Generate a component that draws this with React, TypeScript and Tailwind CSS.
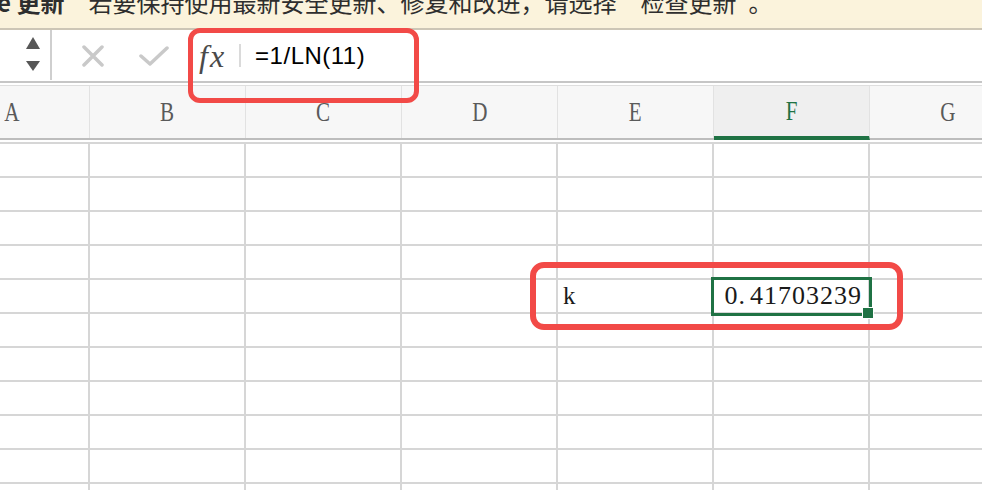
import React from 'react';

const cols = ['A', 'B', 'C', 'D', 'E', 'F', 'G'];
const rows = Array.from({ length: 11 }, (_, i) => i);

const Arrows: React.FC = () => (
    <svg width="16" height="36" viewBox="0 0 16 36">
        <path d="M8 0 L15 12 L1 12 Z" fill="#575757" />
        <path d="M1 24 L15 24 L8 34 Z" fill="#575757" />
    </svg>
);

const Cell: React.FC<{ col: string; row: number }> = ({ col, row }) => {
    if (row === 4 && col === 'E') {
        return (
            <div className="w-[156px] h-[34px] flex-none border-r-2 border-b-2 border-[#d6d6d6] pl-[5px] text-[25px] leading-[32px] text-[#1a1a1a] [font-family:'Liberation_Serif',serif]">
                k
            </div>
        );
    }
    if (row === 4 && col === 'F') {
        return (
            <div className="relative w-[156px] h-[34px] flex-none border-r-2 border-b-2 border-[#d6d6d6] pr-[6px] text-right text-[26px] leading-[32px] tracking-[1px] text-[#1a1a1a] [font-family:'Liberation_Serif',serif]">
                0.<span className="ml-[4px]">41703239</span>
                <div className="absolute -left-[3px] -top-[3px] w-[161px] h-[39px] border-[3px] border-[#1f7244]" />
                <div className="absolute left-[148px] top-[27px] w-[12px] h-[12px] bg-[#1f7244] border border-white" />
            </div>
        );
    }
    return <div className="w-[156px] h-[34px] flex-none border-r-2 border-b-2 border-[#d6d6d6]" />;
};

const App: React.FC = () => {
    return (
        <div className="relative w-[982px] h-[490px] overflow-hidden bg-white [font-family:'Liberation_Sans','Noto_Sans_CJK_SC',sans-serif]">
            {/* update banner */}
            <div className="h-[30px] bg-[#fbf3dc] border-b-2 border-[#cdc6b6] overflow-hidden whitespace-nowrap">
                <div className="-mt-[10px] -ml-[3px] text-[24px] leading-[24px] text-[#2e2e2e] [font-family:'Noto_Sans_CJK_SC',sans-serif]">
                    <span className="font-bold">e 更新”</span>若要保持使用最新安全更新、修复和改进，请选择“检查更新”。
                </div>
            </div>

            {/* formula bar */}
            <div className="h-[53px] flex items-center border-b-2 border-[#c6c6c6]">
                <div className="w-[52px] h-[50px] self-start flex-none border-r-2 border-[#cfcfcf] flex items-center justify-end pr-[9px]">
                    <Arrows />
                </div>
                <svg className="ml-[30px] flex-none" width="22" height="22" viewBox="0 0 22 22">
                    <path d="M2 2 L20 20 M20 2 L2 20" stroke="#c9c9c9" strokeWidth="3.5" strokeLinecap="round" />
                </svg>
                <svg className="ml-[35px] flex-none" width="30" height="22" viewBox="0 0 30 22">
                    <path d="M2 11 L11 19 L28 3" stroke="#c9c9c9" strokeWidth="3.5" strokeLinecap="round" strokeLinejoin="round" fill="none" />
                </svg>
                <div className="ml-[30px] italic text-[32px] leading-none tracking-[2px] text-[#4a4a4a] [font-family:'Liberation_Serif',serif]">fx</div>
                <div className="ml-[13px] w-[2px] h-[23px] bg-[#dadada]" />
                <div className="ml-[14px] text-[24px] tracking-[0.5px] text-black">=1/LN(11)</div>
            </div>

            {/* column headers */}
            <div className="mt-[2px] h-[55px] flex -ml-[66px] bg-[#f7f7f7] border-t border-[#dedede] border-b-2 border-b-[#bdbdbd]">
                {cols.map(c => (
                    <div
                        key={c}
                        className={
                            c === 'F'
                                ? 'w-[156px] flex-none flex items-center justify-center bg-[#efefef] border-r border-[#e2e2e2] border-b-4 border-b-[#1f7244] -mb-[2px] text-[#1f7244]'
                                : 'w-[156px] flex-none flex items-center justify-center border-r border-[#e2e2e2] text-[#5a5a5a]'
                        }
                    >
                        <span className="inline-block scale-x-[0.78] text-[27px] leading-none [font-family:'Liberation_Serif',serif]">{c}</span>
                    </div>
                ))}
            </div>

            {/* grid */}
            <div className="mt-[2px] -ml-[66px] border-t-2 border-[#d6d6d6]">
                {rows.map(r => (
                    <div key={r} className="flex">
                        {cols.map(c => <Cell key={c} col={c} row={r} />)}
                    </div>
                ))}
            </div>

            {/* annotations */}
            <div className="absolute left-[188px] top-[28px] w-[231px] h-[75px] rounded-[12px] border-[5px] border-[#f24a47]" />
            <div className="absolute left-[530px] top-[262px] w-[373px] h-[68px] rounded-[14px] border-[6px] border-[#f24a47]" />
        </div>
    );
};

export default App;
